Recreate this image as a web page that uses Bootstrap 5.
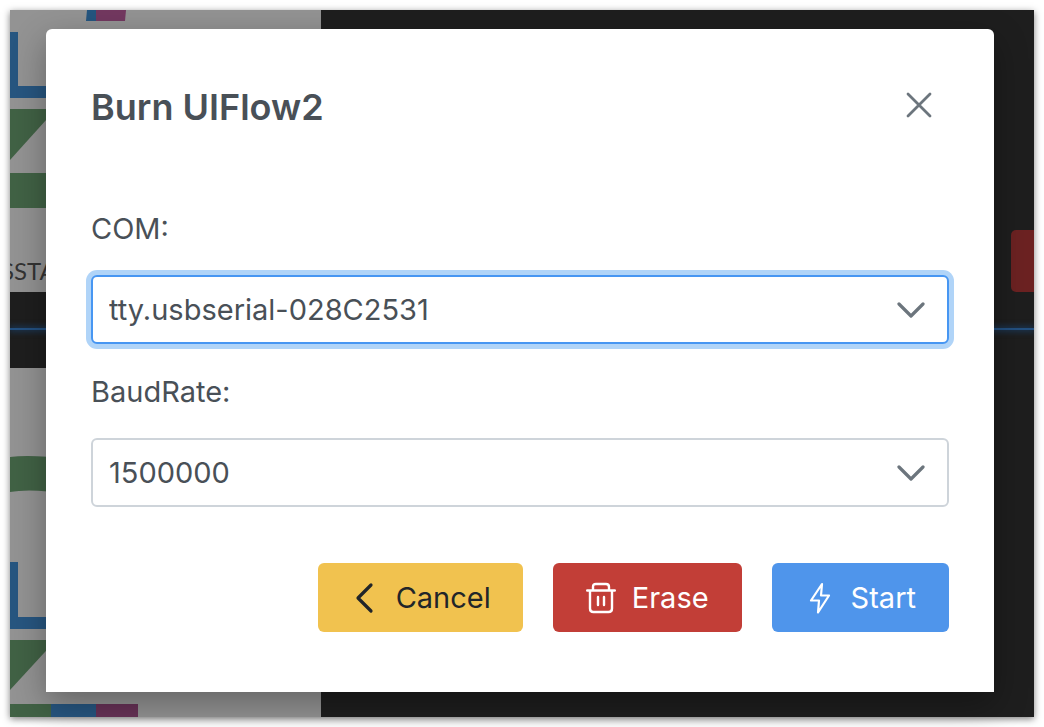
<!DOCTYPE html>
<html lang="en">
<head>
<meta charset="utf-8">
<meta name="viewport" content="width=device-width, initial-scale=1">
<title>Burn UIFlow2</title>
<link href="https://cdn.jsdelivr.net/npm/bootstrap@5.3.0/dist/css/bootstrap.min.css" rel="stylesheet">
<style>
  body { font-family: Inter, "Liberation Sans", sans-serif; font-size: 29px; line-height: 44px; color: #495057; background: #fff; padding: 10px; }
  .app-window { min-height: calc(100vh - 21px); background: #1e1e1e; box-shadow: 0 2px 7px rgba(0,0,0,.5); padding: 19px 40px 25px 36px; }
  .scene { left: 0; top: 0; width: 311px; height: 100%; }
  .scene-line-wrap { left: 0; right: 0; top: 308px; height: 22px; padding-top: 10px; }
  .scene-line { height: 2px; background: #235080; box-shadow: 0 0 6px 1px #1b416b; }
  .scene-button { right: 0; top: 220px; width: 23px; height: 62px; background: #6c2222; border-radius: 5px 0 0 5px; }
  .burn-dialog { background: #fff; border-radius: 6px 6px 0 0; padding: 46px 45px 60px; box-shadow: 0 12px 34px rgba(0,0,0,.32); }
  .burn-head { height: 64px; margin-bottom: 68px; }
  .burn-title { font-size: 36px; font-weight: 600; line-height: 44px; }
  .close-btn { width: 60px; height: 60px; color: #6c757d; margin-bottom: 4px; }
  .field-label { margin-bottom: 24px; }
  .field-select { height: 69px; border: 2px solid #ced4da; border-radius: 6px; padding: 0 60px 0 16px; font-size: 29px; color: #495057;
    background-image: url("data:image/svg+xml,%3Csvg xmlns='http://www.w3.org/2000/svg' viewBox='0 0 28 16'%3E%3Cpath d='M2 2l12 12L26 2' fill='none' stroke='%236c757d' stroke-width='3.2' stroke-linecap='round' stroke-linejoin='round'/%3E%3C/svg%3E");
    background-size: 28px 16px; background-position: right 22px center; }
  .field-select.active-field { border-color: #4796f2; box-shadow: 0 0 0 5px #b0d4f8; }
  .field-group { margin-bottom: 26px; }
  .action-row { gap: 30px; margin-top: 56px; }
  .action-btn { height: 69px; border: 0; border-radius: 6px; font-size: 29px; line-height: 44px; padding: 0 33px; }
  .btn-cancel, .btn-cancel:hover { background: #f1c24f; color: #212529; padding: 0 32px; }
  .btn-erase, .btn-erase:hover { background: #c23e37; color: #fff; }
  .btn-start, .btn-start:hover { background: #4f95eb; color: #fff; }
</style>
</head>
<body>
<main class="app-window position-relative">
  <svg class="scene position-absolute" aria-hidden="true">
    <rect width="311" height="100%" fill="#939393"/>
    <path d="M77 0h9v11h-10z" fill="#25557f"/><path d="M86 0h30l-1 11H86z" fill="#733860"/>
    <path d="M0 22h8v54h40v12H0z" fill="#275680"/>
    <path d="M0 99h46L0 150z" fill="#416245"/>
    <rect y="163" width="60" height="35" fill="#416245"/>
    <text x="-9" y="270" font-family="Lato, sans-serif" font-size="24" fill="#333">SSTA</text>
    <rect y="282" width="311" height="76" fill="#1e1e1e"/>
    <path d="M0 447Q20 444 60 449V484Q20 478 0 482z" fill="#416245"/>
    <path d="M0 552h8v55h40v12H0z" fill="#275680"/>
    <path d="M0 630h46L0 680z" fill="#416245"/>
    <rect y="694" width="41" height="13" fill="#416245"/><rect x="41" y="694" width="45" height="13" fill="#275680"/><rect x="86" y="694" width="42" height="13" fill="#683257"/>
  </svg>
  <div class="scene-line-wrap position-absolute overflow-hidden"><div class="scene-line"></div></div>
  <div class="scene-button position-absolute"></div>

  <section class="burn-dialog position-relative" role="dialog" aria-labelledby="burn-title">
    <header class="burn-head d-flex justify-content-between align-items-center">
      <h1 class="burn-title mb-0" id="burn-title">Burn UIFlow2</h1>
      <button type="button" class="close-btn btn border-0 p-0 d-flex align-items-center justify-content-center" aria-label="Close">
        <svg width="26" height="26" viewBox="0 0 26 26" fill="none" stroke="currentColor" stroke-width="2.8" stroke-linecap="round"><path d="M2 2l22 22M24 2L2 24"/></svg>
      </button>
    </header>
    <form>
      <div class="field-group">
        <label class="field-label d-block" for="com">COM:</label>
        <select class="field-select active-field form-select" id="com"><option>tty.usbserial-028C2531</option></select>
      </div>
      <div>
        <label class="field-label d-block" for="baud">BaudRate:</label>
        <select class="field-select form-select" id="baud"><option>1500000</option></select>
      </div>
      <div class="action-row d-flex justify-content-end">
        <button type="button" class="action-btn btn-cancel btn d-flex align-items-center gap-3">
          <svg width="30" height="32" viewBox="0 0 30 32" fill="none" stroke="currentColor" stroke-width="3.2" stroke-linecap="round" stroke-linejoin="round"><path d="M21 3L8 16l13 13"/></svg>
          Cancel
        </button>
        <button type="button" class="action-btn btn-erase btn d-flex align-items-center gap-3">
          <svg width="30" height="32" viewBox="0 0 30 32" fill="none" stroke="currentColor" stroke-width="2.4" stroke-linecap="round" stroke-linejoin="round"><path d="M1.200 8.500h27.600M4 8.500v18q0 3.500 3.500 3.500h15q3.500 0 3.500-3.500V8.500M7 8.500V5q0-3 3-3h10q3 0 3 3v3.500M12 15v8M18 15v8"/></svg>
          Erase
        </button>
        <button type="button" class="action-btn btn-start btn d-flex align-items-center gap-3">
          <svg width="30" height="32" viewBox="0 0 30 32" fill="none" stroke="currentColor" stroke-width="2.2" stroke-linejoin="round"><path d="M17 2L6 18.500h8L13 30.500 24 13.500h-8z"/></svg>
          Start
        </button>
      </div>
    </form>
  </section>
</main>
<script src="https://cdn.jsdelivr.net/npm/bootstrap@5.3.0/dist/js/bootstrap.bundle.min.js"></script>
</body>
</html>
